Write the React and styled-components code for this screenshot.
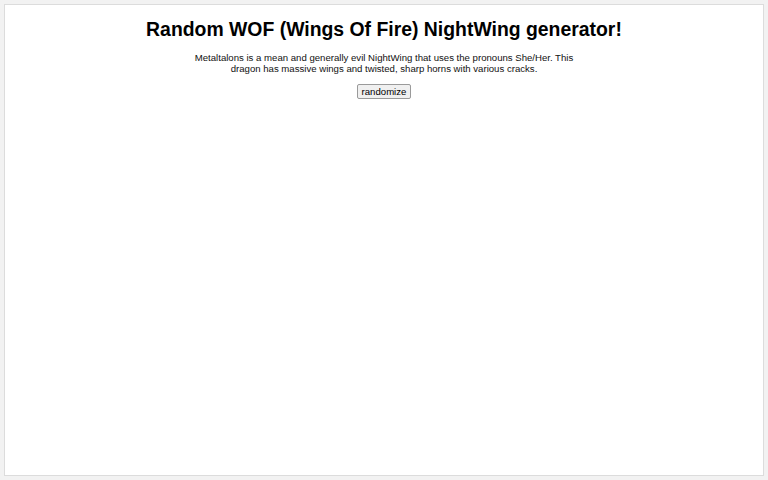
import React, { useState } from "react";
import styled, { createGlobalStyle } from "styled-components";

const GlobalStyle = createGlobalStyle`
  html, body {
    margin: 0;
    padding: 0;
    background: #f2f2f2;
  }
  body {
    font-family: "Liberation Sans", Arial, sans-serif;
  }
`;

const Page = styled.div`
  padding: 4px;
  height: 480px;
  box-sizing: border-box;
`;

const Card = styled.main`
  height: 472px;
  box-sizing: border-box;
  background: #fff;
  border: 1px solid #dcdcdc;
  display: flex;
  flex-direction: column;
  align-items: center;
  padding-top: 14px;
`;

const Title = styled.h1`
  margin: 0;
  font-size: 19.4px;
  font-weight: bold;
  color: #000;
  line-height: 20px;
`;

const Blurb = styled.p`
  margin: 13px 0 0;
  width: 390px;
  font-size: 9.6px;
  line-height: 11px;
  text-align: center;
  color: #111;
`;

const Button = styled.button`
  margin-top: 10px;
  font-family: "Liberation Sans", Arial, sans-serif;
  font-size: 9.6px;
  padding: 1px 4px;
  height: 15px;
  line-height: 11px;
  background: #f0f0f0;
  border: 1px solid #9a9a9a;
  border-radius: 2px;
  color: #000;
`;

const dragons = [
  "Metaltalons is a mean and generally evil NightWing that uses the pronouns She/Her. This dragon has massive wings and twisted, sharp horns with various cracks.",
];

export default function App() {
  const [text] = useState(dragons[0]);

  return (
    <Page>
      <GlobalStyle />
      <Card>
        <Title>Random WOF (Wings Of Fire) NightWing generator!</Title>
        <Blurb>{text}</Blurb>
        <Button>randomize</Button>
      </Card>
    </Page>
  );
}
